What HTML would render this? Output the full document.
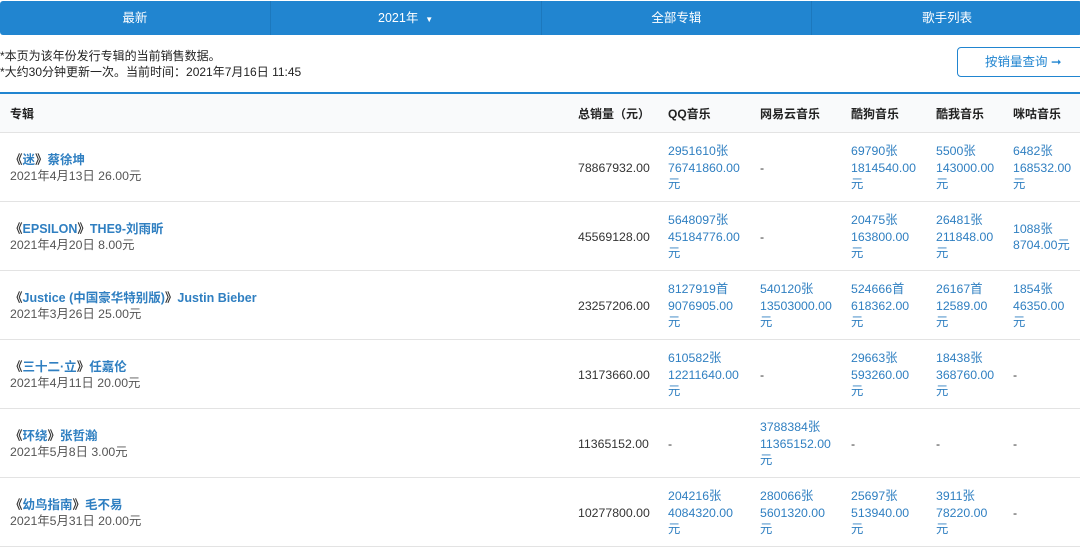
<!DOCTYPE html>
<html><head><meta charset="utf-8"><style>
body{margin:0;width:1080px;height:550px;overflow:hidden;background:#fff;font-family:"Liberation Sans","Noto Sans CJK SC",sans-serif;font-size:12px;color:#333}
.nav{position:absolute;left:0;top:1px;width:1082px;height:34px;background:#2185d0;border-radius:3px;display:flex;color:#fff;font-size:12.5px}
.nav div{flex:1;text-align:center;line-height:34px;border-right:1px solid #1c78bd}
.nav div:last-child{border:none}
.note{position:absolute;left:0;top:48px;line-height:16px;color:#222}
.btn{position:absolute;left:957px;top:47px;width:130px;height:30px;border:1px solid #2185d0;border-radius:4px;box-sizing:border-box;color:#2185d0;line-height:28px;padding-left:27px;font-size:12.5px}
table{position:absolute;left:0;top:92px;width:1082px;border-collapse:collapse;border-top:2px solid #2185d0;table-layout:fixed}
th{background:#f9fafb;height:38px;text-align:left;font-weight:bold;color:#222;padding:0 0 0 10px;border-bottom:1px solid #e3e3e3;font-size:12px}
td{height:66px;padding:2px 0 0 10px;border-bottom:1px solid #e3e3e3;line-height:16.5px;vertical-align:middle;font-size:12.3px}
.b{color:#2f7fc1}
.t{font-weight:bold;font-size:12.5px}
.s{color:#555}
</style></head><body>
<div class="nav"><div>最新</div><div>2021年 &nbsp;<span style="font-size:8px">▼</span></div><div>全部专辑</div><div>歌手列表</div></div>
<div class="note">*本页为该年份发行专辑的当前销售数据。<br>*大约30分钟更新一次。当前时间：2021年7月16日 11:45</div>
<div class="btn">按销量查询 ➞</div>
<table>
<colgroup><col style="width:568px"><col style="width:90px"><col style="width:92px"><col style="width:91px"><col style="width:85px"><col style="width:77px"><col></colgroup>
<tr><th>专辑</th><th>总销量（元）</th><th>QQ音乐</th><th>网易云音乐</th><th>酷狗音乐</th><th>酷我音乐</th><th>咪咕音乐</th></tr>
<tr><td><span class="t">《<span class="b">迷</span>》<span class="b">蔡徐坤</span></span><br><span class="s">2021年4月13日 26.00元</span></td><td>78867932.00</td><td class="b">2951610张<br>76741860.00<br>元</td><td>-</td><td class="b">69790张<br>1814540.00<br>元</td><td class="b">5500张<br>143000.00<br>元</td><td class="b">6482张<br>168532.00<br>元</td></tr>
<tr><td><span class="t">《<span class="b">EPSILON</span>》<span class="b">THE9-刘雨昕</span></span><br><span class="s">2021年4月20日 8.00元</span></td><td>45569128.00</td><td class="b">5648097张<br>45184776.00<br>元</td><td>-</td><td class="b">20475张<br>163800.00<br>元</td><td class="b">26481张<br>211848.00<br>元</td><td class="b">1088张<br>8704.00元</td></tr>
<tr><td><span class="t">《<span class="b">Justice (中国豪华特别版)</span>》<span class="b">Justin Bieber</span></span><br><span class="s">2021年3月26日 25.00元</span></td><td>23257206.00</td><td class="b">8127919首<br>9076905.00<br>元</td><td class="b">540120张<br>13503000.00<br>元</td><td class="b">524666首<br>618362.00<br>元</td><td class="b">26167首<br>12589.00<br>元</td><td class="b">1854张<br>46350.00<br>元</td></tr>
<tr><td><span class="t">《<span class="b">三十二·立</span>》<span class="b">任嘉伦</span></span><br><span class="s">2021年4月11日 20.00元</span></td><td>13173660.00</td><td class="b">610582张<br>12211640.00<br>元</td><td>-</td><td class="b">29663张<br>593260.00<br>元</td><td class="b">18438张<br>368760.00<br>元</td><td>-</td></tr>
<tr><td><span class="t">《<span class="b">环绕</span>》<span class="b">张哲瀚</span></span><br><span class="s">2021年5月8日 3.00元</span></td><td>11365152.00</td><td>-</td><td class="b">3788384张<br>11365152.00<br>元</td><td>-</td><td>-</td><td>-</td></tr>
<tr><td><span class="t">《<span class="b">幼鸟指南</span>》<span class="b">毛不易</span></span><br><span class="s">2021年5月31日 20.00元</span></td><td>10277800.00</td><td class="b">204216张<br>4084320.00<br>元</td><td class="b">280066张<br>5601320.00<br>元</td><td class="b">25697张<br>513940.00<br>元</td><td class="b">3911张<br>78220.00<br>元</td><td>-</td></tr>
</table>
</body></html>
